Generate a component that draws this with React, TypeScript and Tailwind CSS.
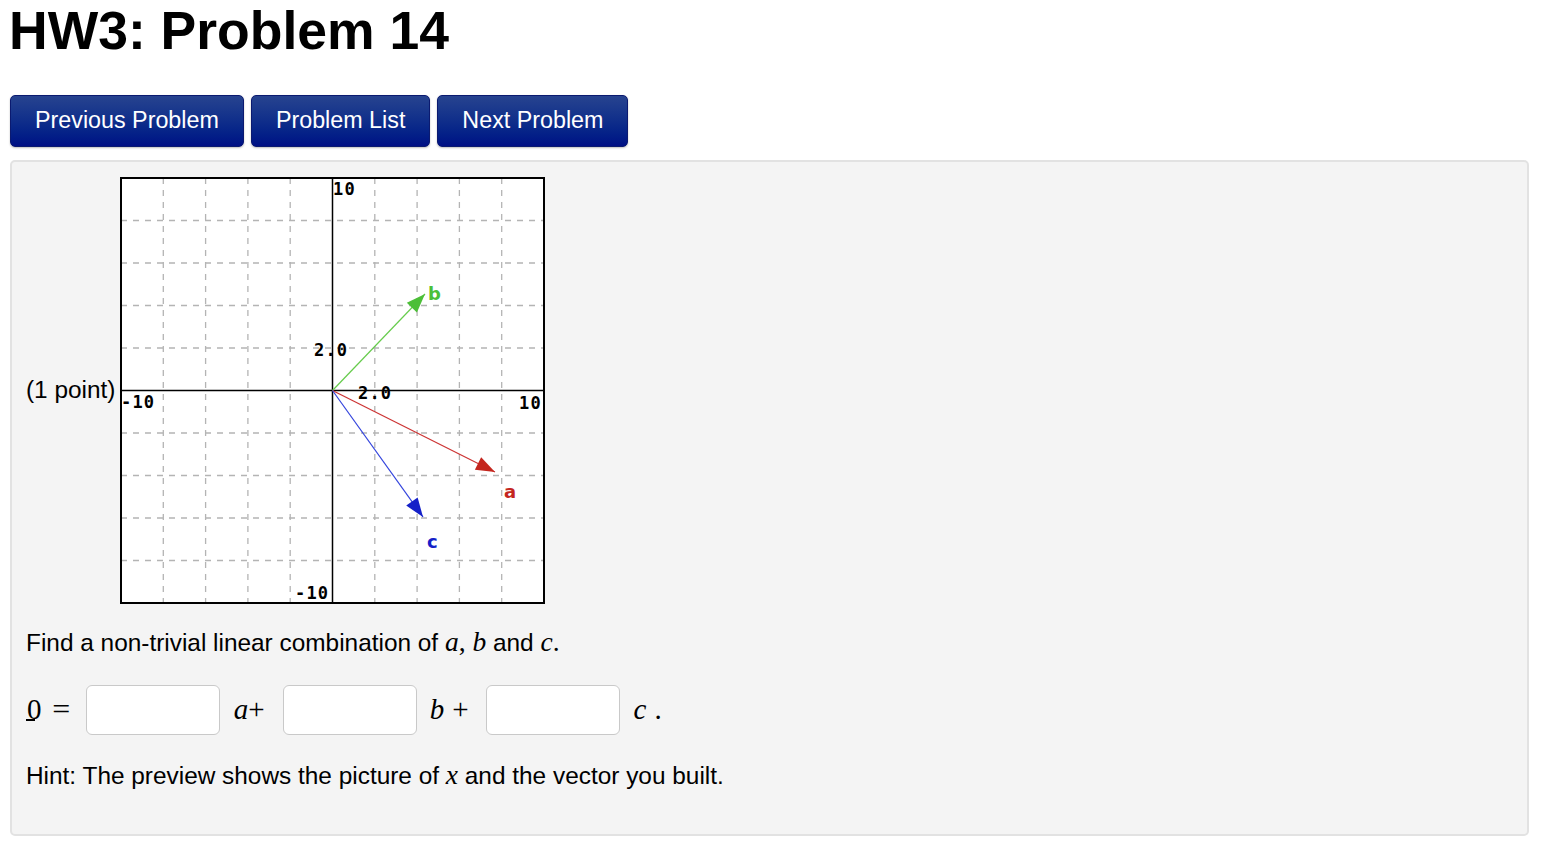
import React from 'react'

const ox = 212.5
const oy = 213.5
const cw = 42.3
const ch = 42.5

type Vec = { tip: [number, number]; color: string; head: string; label: string; lx: number; ly: number }

const vectors: Vec[] = [
  { tip: [305, 117], color: '#66cc4c', head: '#4cbf38', label: 'b', lx: 308, ly: 123 },
  { tip: [375, 295], color: '#cc3333', head: '#c4261e', label: 'a', lx: 384, ly: 321 },
  { tip: [303, 340], color: '#3344dd', head: '#1420c8', label: 'c', lx: 307, ly: 371 },
]

function arrowHead(tip: [number, number]) {
  const dx = tip[0] - ox
  const dy = tip[1] - oy
  const len = Math.hypot(dx, dy)
  const ux = dx / len
  const uy = dy / len
  const bx = tip[0] - ux * 19
  const by = tip[1] - uy * 19
  const nx = -uy * 7
  const ny = ux * 7
  return `${tip[0]},${tip[1]} ${bx + nx},${by + ny} ${bx - nx},${by - ny}`
}

function Graph() {
  const idx = [1, 2, 3, 4, 6, 7, 8, 9]
  return (
    <svg width="425" height="427" viewBox="0 0 425 427" className="shrink-0">
      <rect x="1" y="1" width="423" height="425" fill="white" />
      {idx.map(i => (
        <line key={'v' + i} x1={1 + i * cw} y1="1" x2={1 + i * cw} y2="426" stroke="#b4b4b4" strokeWidth="1.3" strokeDasharray="6 6" />
      ))}
      {idx.map(i => (
        <line key={'h' + i} x1="1" y1={1 + i * ch} x2="424" y2={1 + i * ch} stroke="#b4b4b4" strokeWidth="1.3" strokeDasharray="6 6" />
      ))}
      <line x1="1" y1={oy} x2="424" y2={oy} stroke="black" strokeWidth="1.5" />
      <line x1={ox} y1="1" x2={ox} y2="426" stroke="black" strokeWidth="1.5" />
      <rect x="1" y="1" width="423" height="425" fill="none" stroke="black" strokeWidth="2" />
      <g fontFamily="'DejaVu Sans Mono', monospace" fontWeight="700" fontSize="17" fill="black" letterSpacing="1.2">
        <text x="213" y="18">10</text>
        <text x="194" y="179">2.0</text>
        <text x="238" y="222">2.0</text>
        <text x="1" y="231">-10</text>
        <text x="399" y="232">10</text>
        <text x="175" y="422">-10</text>
      </g>
      {vectors.map(v => (
        <g key={v.label}>
          <line x1={ox} y1={oy} x2={v.tip[0]} y2={v.tip[1]} stroke={v.color} strokeWidth="1.2" />
          <polygon points={arrowHead(v.tip)} fill={v.head} />
          <text x={v.lx} y={v.ly} fill={v.head} fontFamily="'DejaVu Sans', sans-serif" fontWeight="700" fontSize="18">
            {v.label}
          </text>
        </g>
      ))}
    </svg>
  )
}

const btn =
  'h-[52px] rounded-[5px] border border-[#0b1a70] bg-gradient-to-b from-[#27438f] to-[#000f85] px-[24px] text-[23.3px] leading-none text-white shadow-[0_1px_2px_rgba(0,0,0,0.25)]'

const field = 'h-[50px] w-[134px] rounded-[6px] border border-[#c9c9c9] bg-white'

function MathVar({ children }: { children: React.ReactNode }) {
  return <span className="font-['Liberation_Serif',serif] text-[27.5px] italic">{children}</span>
}

export default function App() {
  return (
    <div className="min-h-screen bg-white px-[10px] font-['Liberation_Sans',Arial,sans-serif] text-black">
      <h1 className="-ml-[1px] mt-[2px] text-[53.5px] font-bold leading-[58px]">HW3: Problem 14</h1>

      <div className="mt-[35px] flex gap-[7px]">
        <button className={btn}>Previous Problem</button>
        <button className={btn}>Problem List</button>
        <button className={btn}>Next Problem</button>
      </div>

      <div className="mt-[13px] w-[1519px] rounded-[5px] border-2 border-[#e2e2e2] bg-[#f4f4f4] pb-[44px] pl-[14px] pt-[15px] text-[24.4px]">
        <div className="flex items-center gap-[5px]">
          <span className="leading-none">(1 point)</span>
          <Graph />
        </div>

        <p className="mt-[24px] leading-[28px]">
          Find a non-trivial linear combination of <MathVar>a</MathVar>
          <span className="font-['Liberation_Serif',serif] text-[27.5px]">, </span>
          <MathVar>b</MathVar> and <MathVar>c</MathVar>
          <span className="font-['Liberation_Serif',serif] text-[27.5px]">.</span>
        </p>

        <div className="mt-[28px] flex h-[50px] items-center font-['Liberation_Serif',serif] text-[29px]">
          <span className="relative ml-[1px]">
            0
            <span className="absolute left-[-1px] top-[31px] h-[2px] w-[9px] bg-black" />
          </span>
          <span className="ml-[11px] inline-block scale-x-110">=</span>
          <input className={`ml-[17px] ${field}`} />
          <span className="ml-[14px] italic">a</span>
          <span>+</span>
          <input className={`ml-[18px] ${field}`} />
          <span className="ml-[13px] italic">b</span>
          <span className="ml-[8px]">+</span>
          <input className={`ml-[17px] ${field}`} />
          <span className="ml-[14px] italic">c</span>
          <span className="ml-[8px]">.</span>
        </div>

        <p className="mt-[26px] leading-[28px]">
          Hint: The preview shows the picture of <MathVar>x</MathVar> and the vector you built.
        </p>
      </div>
    </div>
  )
}
